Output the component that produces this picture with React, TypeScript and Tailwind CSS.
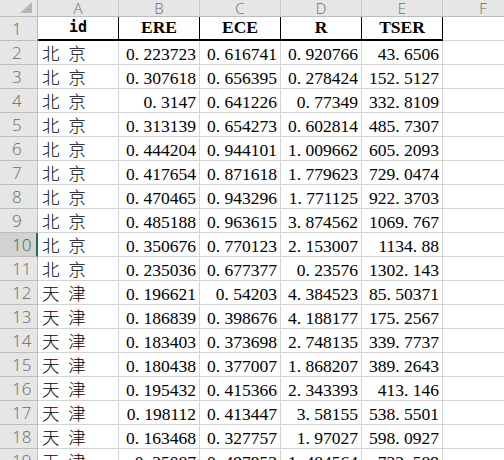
import React from "react";

const rows: [string, string, string, string, string][] = [
  ["北京", "0.223723", "0.616741", "0.920766", "43.6506"],
  ["北京", "0.307618", "0.656395", "0.278424", "152.5127"],
  ["北京", "0.3147", "0.641226", "0.77349", "332.8109"],
  ["北京", "0.313139", "0.654273", "0.602814", "485.7307"],
  ["北京", "0.444204", "0.944101", "1.009662", "605.2093"],
  ["北京", "0.417654", "0.871618", "1.779623", "729.0474"],
  ["北京", "0.470465", "0.943296", "1.771125", "922.3703"],
  ["北京", "0.485188", "0.963615", "3.874562", "1069.767"],
  ["北京", "0.350676", "0.770123", "2.153007", "1134.88"],
  ["北京", "0.235036", "0.677377", "0.23576", "1302.143"],
  ["天津", "0.196621", "0.54203", "4.384523", "85.50371"],
  ["天津", "0.186839", "0.398676", "4.188177", "175.2567"],
  ["天津", "0.183403", "0.373698", "2.748135", "339.7737"],
  ["天津", "0.180438", "0.377007", "1.868207", "389.2643"],
  ["天津", "0.195432", "0.415366", "2.343393", "413.146"],
  ["天津", "0.198112", "0.413447", "3.58155", "538.5501"],
  ["天津", "0.163468", "0.327757", "1.97027", "598.0927"],
  ["天津", "0.25087", "0.497953", "1.484564", "722.589"],
];

const serif = { fontFamily: '"Liberation Serif", "Times New Roman", serif' };
const cjk = { fontFamily: '"Noto Sans CJK SC", "Noto Sans", sans-serif' };
const ui = { fontFamily: '"Open Sans", "Liberation Sans", Arial, sans-serif' };

function Num({ v }: { v: string }) {
  const [a, b] = v.split(".");
  return (
    <span>
      {a}
      {b !== undefined && (
        <>
          <span className="inline-block w-[0.5em]">.</span>
          {b}
        </>
      )}
    </span>
  );
}

function City({ v }: { v: string }) {
  return (
    <span>
      {v[0]}
      <span className="inline-block w-[0.5em]"> </span>
      {v[1]}
    </span>
  );
}

const cols = ["A", "B", "C", "D", "E", "F"];

export default function App() {
  return (
    <div className="w-[504px] h-[460px] overflow-hidden bg-white select-none">
      {/* column header */}
      <div className="flex h-[17px]">
        <div className="w-[38px] h-[17px] shrink-0 bg-[#e6e6e6] border-r border-b border-[#bcbcbc] relative">
          <div className="absolute right-[5px] bottom-[3px] w-0 h-0 border-l-[12px] border-l-transparent border-b-[11px] border-b-[#b5b5b5]" />
        </div>
        {cols.map((c) => (
          <div
            key={c}
            className="w-[81px] h-[17px] shrink-0 bg-[#e6e6e6] border-r border-b border-r-[#c9c9c9] border-b-[#bcbcbc] flex items-center justify-center text-[15px] leading-[15px] font-light text-[#6a6a6a]"
            style={ui}
          >
            {c}
          </div>
        ))}
      </div>

      {/* row 1 */}
      <div className="flex h-[24px]">
        <div
          className="w-[38px] h-[24px] shrink-0 bg-[#e6e6e6] border-r border-b border-[#bcbcbc] pl-[12px] flex items-center text-[17px] font-light text-[#6a6a6a]"
          style={ui}
        >
          1
        </div>
        {["id", "ERE", "ECE", "R", "TSER"].map((h, i) => (
          <div
            key={h}
            className="w-[81px] h-[24px] shrink-0 border-r border-b-[2px] border-black flex items-end justify-center pb-[2px] text-[17.5px] leading-[20px] font-bold text-black"
            style={
              i === 0
                ? { fontFamily: '"DejaVu Sans Mono", "Liberation Mono", monospace', fontSize: "15px" }
                : serif
            }
          >
            {h}
          </div>
        ))}
        <div className="w-[81px] h-[24px] shrink-0 border-r border-b border-[#d4d4d4]" />
      </div>

      {rows.map((r, idx) => {
        const n = idx + 2;
        const sel = n === 10;
        return (
          <div key={n} className="flex h-[24px]">
            <div
              className={
                sel
                  ? "w-[38px] h-[24px] shrink-0 bg-[#d2d2d2] border-r-[2px] border-r-[#217346] border-b border-b-[#bcbcbc] pl-[12px] flex items-center text-[17px] font-light text-[#217346]"
                  : "w-[38px] h-[24px] shrink-0 bg-[#e6e6e6] border-r border-b border-[#bcbcbc] pl-[12px] flex items-center text-[17px] font-light text-[#6a6a6a]"
              }
              style={ui}
            >
              {n}
            </div>
            <div
              className="w-[81px] h-[24px] shrink-0 border-r border-b border-[#d4d4d4] flex items-end pl-[4px] text-[17.5px] leading-[22px] font-light text-black"
              style={cjk}
            >
              <City v={r[0]} />
            </div>
            {r.slice(1).map((v, i) => (
              <div
                key={i}
                className="w-[81px] h-[24px] shrink-0 border-r border-b border-[#d4d4d4] flex items-end justify-end pr-[3px] text-[17.5px] leading-[20px] text-black"
                style={serif}
              >
                <Num v={v} />
              </div>
            ))}
            <div className="w-[81px] h-[24px] shrink-0 border-r border-b border-[#d4d4d4]" />
          </div>
        );
      })}
    </div>
  );
}
